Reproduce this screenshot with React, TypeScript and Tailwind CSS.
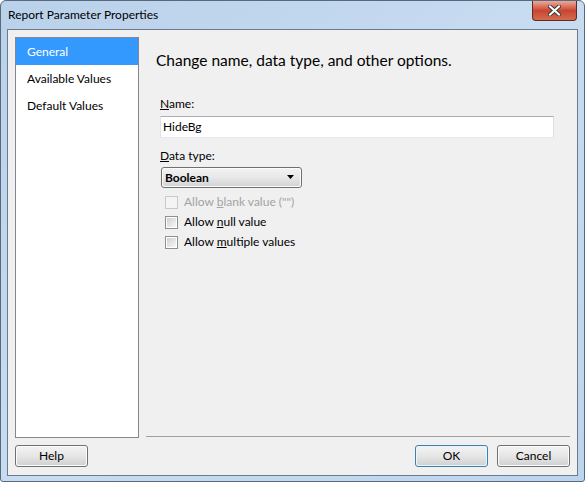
import React from 'react';

const font = { fontFamily: 'Lato, "Noto Sans", sans-serif' };

function Checkbox({ label, disabled }: { label: [string, string, string]; disabled?: boolean }) {
  return (
    <div className="flex items-center h-[20px] pl-[5px]">
      <div
        className={
          disabled
            ? 'w-[13px] h-[13px] border border-[#c9c9c9] bg-[#f4f4f4]'
            : 'w-[13px] h-[13px] border border-[#8e8f8f] p-[1px] bg-white'
        }
      >
        {!disabled && <div className="w-full h-full bg-gradient-to-br from-[#cdd0d5] to-[#f7f7f7]" />}
      </div>
      <span className={disabled ? 'ml-[6px] text-[#a3a3a3]' : 'ml-[6px] text-black'}>
        {label[0]}
        <span className="underline">{label[1]}</span>
        {label[2]}
      </span>
    </div>
  );
}

function Button({ children, focused }: { children: React.ReactNode; focused?: boolean }) {
  return (
    <div
      className={
        focused
          ? 'w-[73px] h-[22px] rounded-[3px] border border-[#3c7fb1] p-[1px] bg-[#eaf6fd]'
          : 'w-[73px] h-[22px] rounded-[3px] border border-[#707070] p-[1px] bg-[#fbfbfb]'
      }
    >
      <div className="w-full h-full rounded-[2px] bg-gradient-to-b from-[#f2f2f2] via-[#e6e6e6] to-[#d2d2d2] flex items-center justify-center text-black">
        {children}
      </div>
    </div>
  );
}

export default function App() {
  return (
    <div
      className="w-[585px] h-[482px] relative flex flex-col text-[12px] bg-gradient-to-br from-[#b9d1ea] via-[#c8dcf1] to-[#bcd5ee] border border-[#59697b] rounded-t-[6px] rounded-b-[3px] overflow-hidden"
      style={font}
    >
      {/* title bar */}
      <div className="h-[28px] flex items-center pl-[7px] text-black">Report Parameter Properties</div>

      {/* close button */}
      <div className="absolute left-[531px] top-0 w-[45px] h-[20px] rounded-b-[4px] border border-t-0 border-[#5e2a22] bg-gradient-to-b from-[#e9a99b] via-[#c9452f] to-[#d36a4e] flex items-center justify-center">
        <svg width="13" height="11" viewBox="0 0 13 11">
          <path d="M2 1.5 L11 9.5 M11 1.5 L2 9.5" stroke="#3b3b3b" strokeWidth="4" strokeLinecap="square" />
          <path d="M2 1.5 L11 9.5 M11 1.5 L2 9.5" stroke="#ffffff" strokeWidth="2" strokeLinecap="square" />
        </svg>
      </div>

      {/* client area */}
      <div className="mx-[6px] mb-[5px] flex-1 border border-[#6c7a8b] bg-[#f0f0f0] flex flex-col px-[7px] pt-[7px] pb-[8px]">
        <div className="flex flex-1">
          {/* nav list */}
          <div className="w-[124px] border border-[#828790] bg-white">
            <div className="h-[27px] bg-[#3399ff] text-white flex items-center pl-[11px]">General</div>
            <div className="h-[27px] flex items-center pl-[11px] text-black">Available Values</div>
            <div className="h-[27px] flex items-center pl-[11px] text-black">Default Values</div>
          </div>

          {/* right panel */}
          <div className="flex-1 flex flex-col">
            <div className="flex-1 flex flex-col">
              <div className="pl-[17px] mt-[13px] text-[15.5px] leading-[21px] text-black">
                Change name, data type, and other options.
              </div>
              <div className="pl-[21px] mt-[25px] leading-[16px] text-black">
                <span className="underline">N</span>ame:
              </div>
              <div className="ml-[21px] mt-[4px] w-[394px] h-[22px] border border-[#abadb3] border-b-[#e3e9ef] border-l-[#e2e3ea] border-r-[#dbdfe6] bg-white flex items-center pl-[2px] text-black">
                HideBg
              </div>
              <div className="pl-[21px] mt-[10px] leading-[16px] text-black">
                <span className="underline">D</span>ata type:
              </div>
              <div className="ml-[22px] mt-[3px] w-[141px] h-[21px] rounded-[3px] border border-[#707070] p-[1px] bg-[#fbfbfb]">
                <div className="w-full h-full rounded-[2px] bg-gradient-to-b from-[#f2f2f2] via-[#e8e8e8] to-[#d4d4d4] flex items-center justify-between pl-[2px] pr-[5px] font-bold text-black">
                  <span>Boolean</span>
                  <svg width="8" height="5" viewBox="0 0 8 5">
                    <path d="M0 0 H7 L3.5 4 Z" fill="#000" />
                  </svg>
                </div>
              </div>
              <div className="ml-[21px] mt-[4px] flex flex-col">
                <Checkbox label={['Allow ', 'b', 'lank value ("")']} disabled />
                <Checkbox label={['Allow ', 'n', 'ull value']} />
                <Checkbox label={['Allow ', 'm', 'ultiple values']} />
              </div>
            </div>
            <div className="ml-[7px] h-[1px] bg-[#a0a0a0] mb-[1px]" />
          </div>
        </div>

        {/* buttons */}
        <div className="mt-[7px] flex items-center">
          <Button>Help</Button>
          <div className="flex-1" />
          <Button focused>OK</Button>
          <div className="w-[9px]" />
          <Button>Cancel</Button>
        </div>
      </div>
    </div>
  );
}
